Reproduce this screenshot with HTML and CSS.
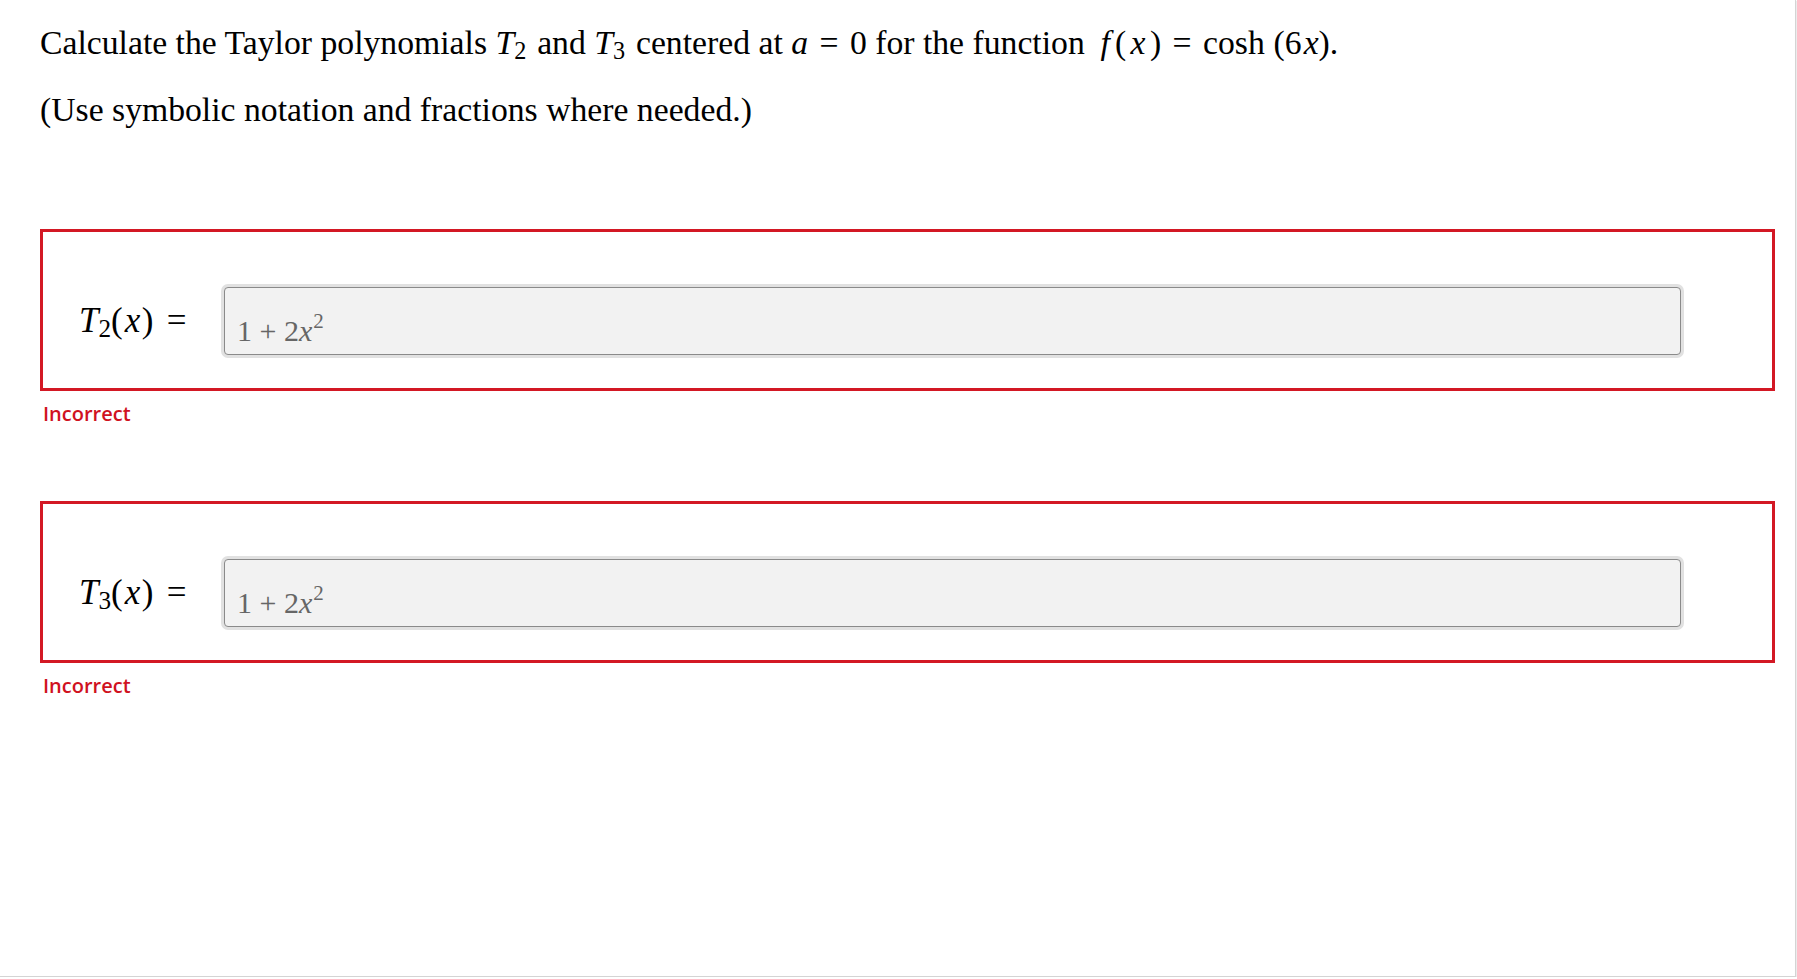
FILE: index.html
```html
<!DOCTYPE html>
<html>
<head>
<meta charset="utf-8">
<link rel="stylesheet" href="styles.css">
</head>
<body>
<div class="page">
  <p class="q">Calculate the Taylor polynomials <span class="m"><i>T</i><span class="sub">2</span></span> and <span class="m"><i>T</i><span class="sub">3</span></span> centered at <span class="m"><i>a</i><span class="rel">=</span>0</span> for the function <span class="m"><i class="fi">f</i>(<i class="xa">x</i>)<span class="rel">=</span>cosh<span class="fnsp"></span>(6<i class="xb">x</i>)</span>.</p>
  <p class="q">(Use symbolic notation and fractions where needed.)</p>

  <div class="answer">
    <div class="label"><i>T</i><span class="sub">2</span>(<i class="xi">x</i>)<span class="rel">=</span></div>
    <div class="field"><span>1</span><span class="op">+</span><span>2</span><i>x</i><span class="sup">2</span></div>
  </div>
  <div class="status">Incorrect</div>

  <div class="answer second">
    <div class="label"><i>T</i><span class="sub">3</span>(<i class="xi">x</i>)<span class="rel">=</span></div>
    <div class="field"><span>1</span><span class="op">+</span><span>2</span><i>x</i><span class="sup">2</span></div>
  </div>
  <div class="status">Incorrect</div>
</div>
</body>
</html>
```
FILE: styles.css
```css
html, body {
  margin: 0;
  padding: 0;
  background: #ffffff;
}

.page {
  box-sizing: border-box;
  width: 1796px;
  height: 977px;
  padding: 23px 0 0 40px;
  border-right: 1px solid #d4d4d4;
  border-bottom: 1px solid #d4d4d4;
  box-shadow: 1px 1px 1px #ececec;
  font-family: "Liberation Serif", "Times New Roman", serif;
  color: #000;
}

.q {
  margin: 0 0 26px 0;
  font-size: 33.7px;
  line-height: 40.8px;
}

.m i {
  font-style: italic;
}

.m .fi {
  margin: 0 0.15em 0 0.22em;
}

.m .xa {
  margin: 0 0.13em;
}

.m .xb {
  margin-left: 0.06em;
}

.sub {
  font-size: 72%;
  vertical-align: -5px;
  line-height: 0;
}

.q .sub {
  margin-right: 0.1em;
}

.rel {
  margin: 0 0.34em;
}

.fnsp {
  display: inline-block;
  width: 0.26em;
}

.answer {
  box-sizing: border-box;
  width: 1735px;
  margin-top: 98px;
  border: 3px solid #d31824;
  padding: 55px 91px 33px 36px;
  display: flex;
  align-items: center;
}

.answer.second {
  margin-top: 74px;
}

.label {
  box-sizing: border-box;
  width: 145px;
  font-size: 35px;
  line-height: 40px;
  white-space: nowrap;
}

.label .xi {
  margin: 0 0.04em 0 0.06em;
}

.label .rel {
  margin: 0 0 0 0.38em;
}

.field {
  flex: 1;
  box-sizing: border-box;
  height: 68px;
  border: 1px solid #8a8a8a;
  border-radius: 4px;
  background: #f2f2f2;
  box-shadow: 0 0 0 3px #e1e1e1;
  padding: 28px 0 0 12px;
  font-size: 30px;
  line-height: 30px;
  color: #666666;
  white-space: nowrap;
}

.field .op {
  margin: 0 0.25em;
}

.field .sup {
  font-size: 70%;
  vertical-align: 13px;
  line-height: 0;
  margin-left: 1px;
}

.status {
  margin: 9px 0 0 3px;
  font-family: "Open Sans", "Noto Sans", sans-serif;
  font-size: 20px;
  font-weight: 600;
  line-height: 27px;
  color: #d0121f;
}
```
